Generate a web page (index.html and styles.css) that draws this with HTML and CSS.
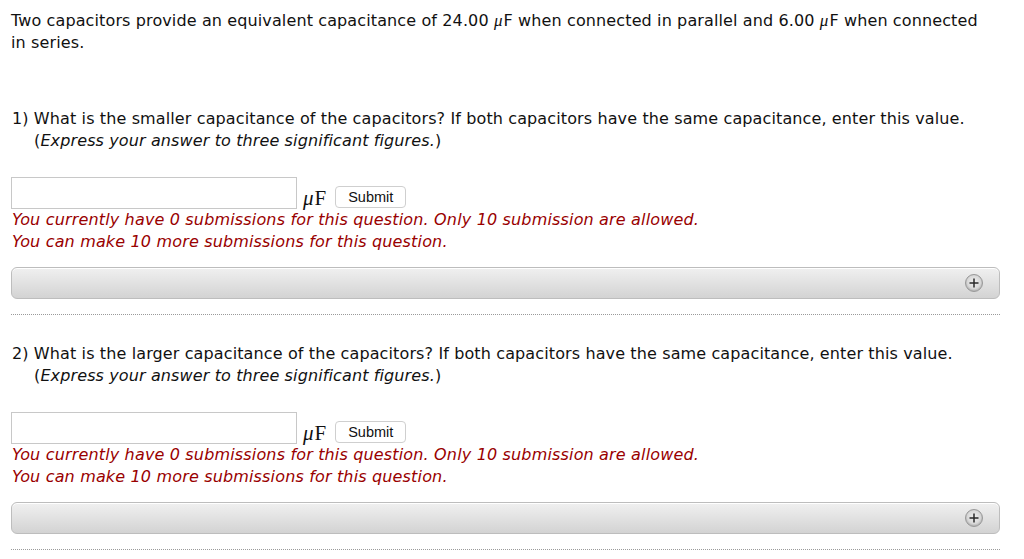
FILE: index.html
```html
<!DOCTYPE html>
<html>
<head>
<meta charset="utf-8">
<link rel="stylesheet" href="styles.css">
</head>
<body>
<div class="page">
  <p class="intro">Two capacitors provide an equivalent capacitance of 24.00 <i class="mu">μ</i>F when connected in parallel and 6.00 <i class="mu">μ</i><span>F when connected </span>in series.</p>

  <div class="question">
    <p class="q-text">1) What is the smaller capacitance of the capacitors? If both capacitors have the same capacitance, enter this value.<br><span class="hint">(<i>Express your answer to three significant figures.</i>)</span></p>
    <div class="answer-row">
      <input class="answer" type="text">
      <span class="unit"><i>μ</i>F</span>
      <button class="submit">Submit</button>
    </div>
    <div class="notice">
      <div>You currently have 0 submissions for this question. Only 10 submission are allowed.</div>
      <div>You can make 10 more submissions for this question.</div>
    </div>
    <div class="bar"><span class="plus"><svg width="20" height="20" viewBox="0 0 20 20"><defs><radialGradient id="g1" cx="50%" cy="45%" r="55%"><stop offset="0" stop-color="#f2f2f2"/><stop offset="0.7" stop-color="#d8d8d8"/><stop offset="1" stop-color="#a8a8a8"/></radialGradient></defs><circle cx="10" cy="10" r="8.5" fill="url(#g1)" stroke="#9a9a9a" stroke-width="1"/><path d="M10 5.5v9M5.5 10h9" stroke="#2a2a2a" stroke-width="1.5"/></svg></span></div>
    <div class="divider"></div>
  </div>

  <div class="question">
    <p class="q-text">2) What is the larger capacitance of the capacitors? If both capacitors have the same capacitance, enter this value.<br><span class="hint">(<i>Express your answer to three significant figures.</i>)</span></p>
    <div class="answer-row">
      <input class="answer" type="text">
      <span class="unit"><i>μ</i>F</span>
      <button class="submit">Submit</button>
    </div>
    <div class="notice">
      <div>You currently have 0 submissions for this question. Only 10 submission are allowed.</div>
      <div>You can make 10 more submissions for this question.</div>
    </div>
    <div class="bar"><span class="plus"><svg width="20" height="20" viewBox="0 0 20 20"><defs><radialGradient id="g2" cx="50%" cy="45%" r="55%"><stop offset="0" stop-color="#f2f2f2"/><stop offset="0.7" stop-color="#d8d8d8"/><stop offset="1" stop-color="#a8a8a8"/></radialGradient></defs><circle cx="10" cy="10" r="8.5" fill="url(#g2)" stroke="#9a9a9a" stroke-width="1"/><path d="M10 5.5v9M5.5 10h9" stroke="#2a2a2a" stroke-width="1.5"/></svg></span></div>
    <div class="divider"></div>
  </div>
</div>
</body>
</html>
```

FILE: styles.css
```css
html, body {
  margin: 0;
  padding: 0;
  background: #fff;
}
.page {
  padding: 10px 24px 0 11px;
  font-family: "DejaVu Sans", sans-serif;
  font-size: 16px;
  line-height: 22px;
  letter-spacing: 0.12px;
  color: #111;
}
p { margin: 0; }
.intro {
  margin-bottom: 54px;
  max-width: 980px;
}
.mu {
  display: inline-block;
  font-family: "Liberation Serif", serif;
  font-size: 17px;
  line-height: 22px;
  margin-right: 1px;
}
.q-text { padding-left: 1px; }
.hint { padding-left: 22px; }
.answer-row {
  display: flex;
  align-items: flex-end;
  margin-top: 25px;
  height: 32px;
}
.answer {
  width: 286px;
  height: 32px;
  box-sizing: border-box;
  border: 1px solid #c8c8c8;
  margin: 0;
  padding: 0;
}
.unit {
  font-family: "Liberation Serif", serif;
  font-size: 21px;
  line-height: 22px;
  letter-spacing: 0;
  margin-left: 6px;
  margin-right: 9px;
}
.unit i { margin-right: 1px; }
.submit {
  font-family: "Liberation Sans", sans-serif;
  font-size: 14.5px;
  letter-spacing: 0;
  height: 22px;
  width: 71px;
  padding: 0;
  background: #fff;
  border: 1px solid #cfcfcf;
  border-radius: 4px;
  color: #111;
  margin-bottom: 1px;
}
.notice {
  color: #990000;
  font-style: italic;
  letter-spacing: 0.16px;
  padding-left: 1px;
}
.bar {
  margin-top: 14px;
  height: 32px;
  box-sizing: border-box;
  border: 1px solid #bdbdbd;
  border-radius: 6px;
  background: linear-gradient(#f0f0f0, #d3d3d3);
  box-shadow: inset 0 1px 0 #fff;
  display: flex;
  align-items: center;
  justify-content: flex-end;
  padding-right: 15px;
}
.plus { display: flex; }
.divider {
  margin-top: 15px;
  border-top: 1px dotted #9a9a9a;
  margin-bottom: 28px;
}
```
